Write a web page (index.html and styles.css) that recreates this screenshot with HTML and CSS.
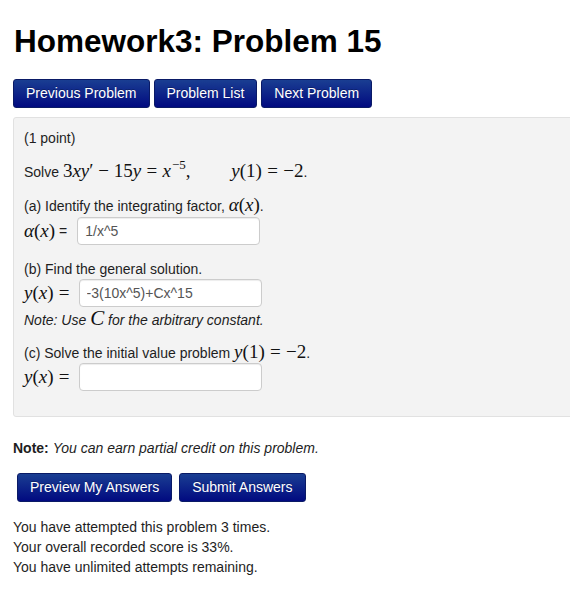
FILE: index.html
```html
<!DOCTYPE html>
<html>
<head>
<meta charset="utf-8">
<link rel="stylesheet" href="styles.css">
</head>
<body>
<div class="page">
  <h1 class="title">Homework3: Problem 15</h1>
  <div class="nav">
    <a class="btn">Previous Problem</a>
    <a class="btn">Problem List</a>
    <a class="btn">Next Problem</a>
  </div>
  <div class="problem">
    <p class="line gap">(1 point)</p>
    <p class="line gap">Solve <span class="m"><span class="n">3</span><i>xy</i>′<span class="bin">−</span><span class="n">15</span><i>y</i><span class="rel">=</span><i>x</i><sup>−5</sup>,</span><span class="m quad"><i>y</i>(<span class="n">1</span>)<span class="rel">=</span>−<span class="n">2</span></span>.</p>
    <p class="line">(a) Identify the integrating factor, <span class="m"><i>α</i>(<i>x</i>)</span>.</p>
    <div class="ansrow row-a gap">
      <span class="m"><i>α</i>(<i>x</i>)</span><span class="eq">=</span>
      <input class="ans" type="text" value="1/x^5">
    </div>
    <p class="line">(b) Find the general solution.</p>
    <div class="ansrow">
      <span class="m"><i>y</i>(<i>x</i>)<span class="rel">=</span></span>
      <input class="ans" type="text" value="-3(10x^5)+Cx^15">
    </div>
    <p class="line note gap">Note: Use <span class="m"><i>C</i></span> for the arbitrary constant.</p>
    <p class="line">(c) Solve the initial value problem <span class="m"><i>y</i>(<span class="n">1</span>)<span class="rel">=</span>−<span class="n">2</span></span>.</p>
    <div class="ansrow row-c">
      <span class="m"><i>y</i>(<i>x</i>)<span class="rel">=</span></span>
      <input class="ans" type="text" value="">
    </div>
  </div>
  <p class="line credit"><b>Note:</b> <i>You can earn partial credit on this problem.</i></p>
  <div class="submit">
    <a class="btn">Preview My Answers</a>
    <a class="btn">Submit Answers</a>
  </div>
  <div class="status">
    <div class="line">You have attempted this problem 3 times.</div>
    <div class="line">Your overall recorded score is 33%.</div>
    <div class="line">You have unlimited attempts remaining.</div>
  </div>
</div>
</body>
</html>
```
FILE: styles.css
```css
html, body {
  margin: 0;
  padding: 0;
  overflow: hidden;
  background: #fff;
}
body {
  font-family: "Liberation Sans", Arial, sans-serif;
  font-size: 14px;
  line-height: 20px;
  color: #1e1e1e;
}
.page {
  padding: 0 0 0 13px;
}
.title {
  margin: 0;
  padding-top: 21px;
  padding-left: 1px;
  font-size: 31.5px;
  line-height: 40px;
  font-weight: bold;
  color: #000;
}
.nav {
  display: flex;
  gap: 4px;
  margin-top: 18px;
}
.btn {
  display: inline-block;
  box-sizing: border-box;
  height: 29px;
  padding: 4px 12px;
  line-height: 19px;
  font-size: 14px;
  color: #fff;
  border: 1px solid #0a1a66;
  border-radius: 3px;
  background: linear-gradient(to bottom, #1a3e92, #010a80);
  text-shadow: 0 -1px 0 rgba(0,0,0,0.25);
  white-space: nowrap;
}
.problem {
  margin-top: 9px;
  margin-right: -40px;
  padding: 10px 10px 25px;
  background: #f3f3f3;
  border: 1px solid #e1e1e1;
  border-radius: 3px 0 0 3px;
}
.line {
  margin: 0;
  line-height: 20px;
  height: 20px;
  white-space: nowrap;
}
.gap {
  margin-bottom: 14px;
}
.problem > .line:first-child {
  margin-bottom: 13px;
}
.ansrow {
  display: flex;
  align-items: center;
  height: 28px;
  white-space: nowrap;
}
.row-a {
  margin-top: 2px;
}
.row-c {
  margin-top: 1px;
}
.ansrow.gap {
  margin-bottom: 14px;
}
.note {
  margin-top: 1px;
  font-style: italic;
}
.note .m i {
  font-size: 21px;
}
.m {
  font-family: "Liberation Serif", "Times New Roman", serif;
  font-size: 19px;
  color: #111;
}
.m i {
  font-style: italic;
}
.m sup {
  font-size: 13px;
  line-height: 0;
  vertical-align: 8px;
  margin-left: 1px;
}
.bin {
  margin: 0 0.25em;
}
.rel {
  margin: 0 0.28em;
}
.quad {
  margin-left: 2.15em;
}
.eq {
  margin: 0 10px 0 4px;
}
.ansrow .m .rel {
  margin-right: 9px;
}
.ans {
  box-sizing: border-box;
  width: 183px;
  height: 28px;
  padding: 0 7px;
  margin: 0;
  font-family: "Liberation Sans", Arial, sans-serif;
  font-size: 14px;
  color: #555;
  background: #fff;
  border: 1px solid #cccccc;
  border-radius: 4px;
  box-shadow: inset 0 1px 1px rgba(0,0,0,0.075);
  outline: none;
}
.credit {
  margin-top: 21px;
}
.submit {
  display: flex;
  gap: 7px;
  margin-top: 15px;
  padding-left: 4px;
}
.status {
  margin-top: 15px;
}
```
